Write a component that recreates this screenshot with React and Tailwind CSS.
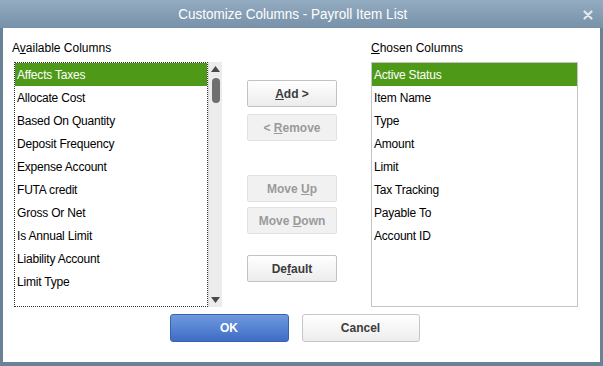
import React from 'react'

const available = [
  'Affects Taxes',
  'Allocate Cost',
  'Based On Quantity',
  'Deposit Frequency',
  'Expense Account',
  'FUTA credit',
  'Gross Or Net',
  'Is Annual Limit',
  'Liability Account',
  'Limit Type',
]

const chosen = ['Active Status', 'Item Name', 'Type', 'Amount', 'Limit', 'Tax Tracking', 'Payable To', 'Account ID']

function Row({ label, selected }) {
  return (
    <div
      className={`h-[23px] pl-[2px] flex items-center text-[12px] whitespace-nowrap tracking-[-0.2px] ${
        selected ? 'bg-[#4e9a18] text-white' : 'text-black'
      }`}
    >
      {label}
    </div>
  )
}

function SideButton({ children, disabled, className = '' }) {
  return (
    <button
      type="button"
      className={`w-[90px] h-[27px] rounded-[2px] border text-[12px] font-bold flex items-center justify-center ${
        disabled
          ? 'border-[#e2e2e2] bg-[#f1f1f1] text-[#9a9a9a]'
          : 'border-[#c2c2c2] bg-gradient-to-b from-[#ffffff] to-[#ececec] text-[#3c3c3c]'
      } ${className}`}
    >
      <span className="whitespace-pre">{children}</span>
    </button>
  )
}

export default function App() {
  return (
    <div className="w-[603px] h-[366px] bg-[#6a8297] flex flex-col font-['Liberation_Sans',Arial,sans-serif] overflow-hidden">
      {/* title bar */}
      <div className="h-[28px] relative flex items-center justify-center pr-[18px] bg-gradient-to-b from-[#94acc2] to-[#7691a8] text-white text-[14px]">
        <span className="inline-block scale-x-[0.965] whitespace-nowrap">Customize Columns - Payroll Item List</span>
        <svg className="absolute right-[10px] top-[10px]" width="10" height="10" viewBox="0 0 10 10">
          <path d="M1.5 1.5 L8.5 8.5 M8.5 1.5 L1.5 8.5" stroke="#e4e8ec" strokeWidth="2.2" strokeLinecap="round" />
        </svg>
      </div>

      <div className="mx-[3px] h-[334px] bg-white flex flex-col">
        <div className="flex pt-[13px]">
          {/* available */}
          <div className="ml-[9px] flex flex-col">
            <div className="h-[14px] leading-[14px] text-[12px] text-black">
              A<span className="underline">v</span>ailable Columns
            </div>
            <div className="mt-[7px] ml-[2px] flex h-[245px]">
              <div className="w-[194px] border border-dotted border-[#333]">
                {available.map((a, i) => (
                  <Row key={a} label={a} selected={i === 0} />
                ))}
              </div>
              <div className="w-[14px] bg-[#ececec] border-l border-[#d8d8d8] flex flex-col items-center">
                <svg className="mt-[4px]" width="9" height="6" viewBox="0 0 9 6">
                  <path d="M4.5 0 L9 6 L0 6 Z" fill="#4a4a4a" />
                </svg>
                <div className="mt-[6px] w-[8px] h-[25px] rounded-full bg-[#6f6f6f]" />
                <div className="flex-1" />
                <svg className="mb-[4px]" width="9" height="6" viewBox="0 0 9 6">
                  <path d="M0 0 L9 0 L4.5 6 Z" fill="#4a4a4a" />
                </svg>
              </div>
            </div>
          </div>

          {/* middle buttons */}
          <div className="ml-[25px] pt-[39px] flex flex-col">
            <SideButton>
              <span className="underline">A</span>dd &gt;
            </SideButton>
            <SideButton disabled className="mt-[7px]">
              &lt; <span className="underline">R</span>emove
            </SideButton>
            <SideButton disabled className="mt-[34px]">
              Move <span className="underline">U</span>p
            </SideButton>
            <SideButton disabled className="mt-[5px]">
              Move <span className="underline">D</span>own
            </SideButton>
            <SideButton className="mt-[21px]">
              De<span className="underline">f</span>ault
            </SideButton>
          </div>

          {/* chosen */}
          <div className="ml-[34px] flex flex-col">
            <div className="h-[14px] leading-[14px] text-[12px] text-black">
              <span className="underline">C</span>hosen Columns
            </div>
            <div className="mt-[7px] w-[207px] h-[245px] border border-[#c4c4c4]">
              {chosen.map((c, i) => (
                <Row key={c} label={c} selected={i === 0} />
              ))}
            </div>
          </div>
        </div>

        {/* bottom buttons */}
        <div className="mt-[7px] flex justify-center gap-[13px] pr-[14px]">
          <button
            type="button"
            className="w-[119px] h-[28px] rounded-[3px] border border-[#3b62ac] bg-gradient-to-b from-[#6f9ade] to-[#3f6cc6] text-white text-[12px] font-bold"
          >
            OK
          </button>
          <button
            type="button"
            className="w-[118px] h-[28px] rounded-[3px] border border-[#c6c6c6] bg-gradient-to-b from-[#ffffff] to-[#ededed] text-[#3c3c3c] text-[12px] font-bold"
          >
            Cancel
          </button>
        </div>
      </div>
    </div>
  )
}
